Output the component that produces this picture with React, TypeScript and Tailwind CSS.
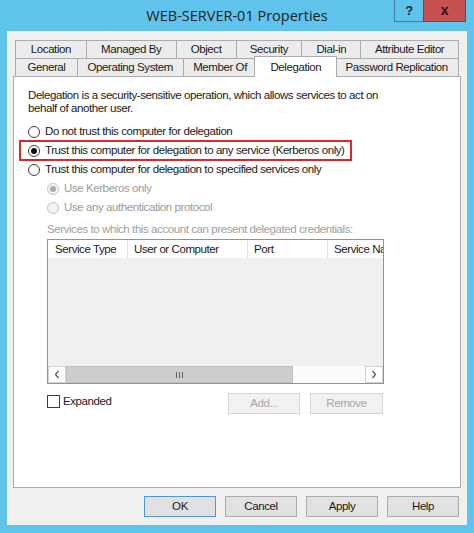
import React from 'react';

interface Tab {
  label: string;
  w: string;
}

const topTabs: Tab[] = [
  { label: 'Location', w: 'w-[72px]' },
  { label: 'Managed By', w: 'w-[91px]' },
  { label: 'Object', w: 'w-[61px]' },
  { label: 'Security', w: 'w-[67px]' },
  { label: 'Dial-in', w: 'w-[60px]' },
  { label: 'Attribute Editor', w: 'w-[99px]' },
];

const bottomTabs: Tab[] = [
  { label: 'General', w: 'w-[63px]' },
  { label: 'Operating System', w: 'w-[107px]' },
  { label: 'Member Of', w: 'w-[75px]' },
  { label: 'Delegation', w: 'w-[79px]' },
  { label: 'Password Replication', w: 'w-[125px]' },
];

const Radio: React.FC<{ checked?: boolean; disabled?: boolean }> = ({ checked = false, disabled = false }) => (
  <span
    className={`w-[12px] h-[12px] rounded-full border flex items-center justify-center shrink-0 ${
      disabled ? 'border-[#c4c4c4] bg-[#f4f4f4]' : 'border-[#3c3c3c] bg-white'
    }`}
  >
    {checked && <span className={`w-[6px] h-[6px] rounded-full ${disabled ? 'bg-[#a9a9a9]' : 'bg-[#111]'}`} />}
  </span>
);

const WinButton: React.FC<{ label: string; primary?: boolean; disabled?: boolean; w?: string }> = ({
  label,
  primary = false,
  disabled = false,
  w = 'w-[72px]',
}) => (
  <div
    className={`${w} h-[21px] flex items-center justify-center border ${
      disabled
        ? 'border-[#d5d5d5] bg-[#f2f2f2] text-[#a6a6a6]'
        : primary
        ? 'border-[#4f95d8] bg-[#e1e1e1] text-[#1a1a1a]'
        : 'border-[#adadad] bg-[#e1e1e1] text-[#1a1a1a]'
    }`}
  >
    {label}
  </div>
);

const Chevron: React.FC<{ dir: 'left' | 'right' }> = ({ dir }) => (
  <svg width="6" height="9" viewBox="0 0 6 9">
    <path
      d={dir === 'left' ? 'M4.5 1 L1.5 4.5 L4.5 8' : 'M1.5 1 L4.5 4.5 L1.5 8'}
      fill="none"
      stroke="#555"
      strokeWidth="1.2"
    />
  </svg>
);

export default function App() {
  return (
    <div className="w-[474px] h-[533px] bg-[#5fc3ec] flex flex-col px-[7px] pb-[8px] font-['Liberation_Sans',Arial,sans-serif] text-[11.5px] tracking-[-0.42px] text-[#1a1a1a]">
      {/* title bar */}
      <div className="relative -mx-[7px] h-[31px] flex items-center justify-center">
        <span className="font-['Open_Sans',sans-serif] text-[14.5px] tracking-normal text-[#1d1d1d]">
          WEB-SERVER-01 Properties
        </span>
        <div className="absolute top-0 right-[8px] flex">
          <div className="w-[30px] h-[22px] border border-t-0 border-[#3e7ea3] flex items-center justify-center font-bold text-[13px] text-[#1a2a35]">
            ?
          </div>
          <div className="w-[43px] h-[22px] -ml-px bg-[#c75050] border border-t-0 border-[#8c3a3a] flex items-center justify-center font-bold text-[14px] text-[#2a1515]">
            x
          </div>
        </div>
      </div>

      {/* dialog body */}
      <div className="flex-1 bg-[#f0f0f0] flex flex-col px-[6px] pt-[9px] pb-[8px]">
        <div className="px-[2px] flex flex-col">
          <div className="flex h-[18px]">
            {topTabs.map((t, i) => (
              <div
                key={t.label}
                className={`${t.w} ${i > 0 ? '-ml-px' : ''} h-[18px] border border-b-0 border-[#acacac] bg-[#ececec] flex items-center justify-center whitespace-nowrap`}
              >
                {t.label}
              </div>
            ))}
          </div>
          <div className="flex h-[18px]">
            {bottomTabs.map((t, i) =>
              t.label === 'Delegation' ? (
                <div
                  key={t.label}
                  className="relative z-10 w-[83px] -ml-[3px] -mr-[2px] -mt-[2px] h-[21px] border border-b-0 border-[#acacac] bg-white flex items-start pt-[2px] justify-center whitespace-nowrap"
                >
                  {t.label}
                </div>
              ) : (
                <div
                  key={t.label}
                  className={`${t.w} ${i > 0 ? '-ml-px' : ''} h-[18px] border border-b-0 border-[#acacac] bg-[#ececec] flex items-center justify-center whitespace-nowrap`}
                >
                  {t.label}
                </div>
              )
            )}
          </div>
        </div>

        {/* tab page */}
        <div className="h-[412px] border border-[#acacac] bg-white flex flex-col pt-[12px] pl-[14px] leading-[13px]">
          <p>
            Delegation is a security-sensitive operation, which allows services to act on
            <br />
            behalf of another user.
          </p>

          <div className="mt-[7px] flex flex-col">
            <div className="h-[19px] flex items-center gap-[5px]">
              <Radio />
              <span>Do not trust this computer for delegation</span>
            </div>
            <div className="-ml-[9px] pl-[7px] w-[333px] h-[21px] -my-[1px] border-2 border-[#e0242c] flex items-center gap-[5px]">
              <Radio checked />
              <span>Trust this computer for delegation to any service (Kerberos only)</span>
            </div>
            <div className="h-[19px] flex items-center gap-[5px]">
              <Radio />
              <span>Trust this computer for delegation to specified services only</span>
            </div>
            <div className="h-[19px] pl-[19px] flex items-center gap-[5px] text-[#9c9c9c]">
              <Radio checked disabled />
              <span>Use Kerberos only</span>
            </div>
            <div className="h-[19px] pl-[19px] flex items-center gap-[5px] text-[#9c9c9c]">
              <Radio disabled />
              <span>Use any authentication protocol</span>
            </div>
          </div>

          <div className="ml-[19px] mt-[6px] text-[#a0a0a0]">
            Services to which this account can present delegated credentials:
          </div>

          {/* list view */}
          <div className="ml-[19px] mt-[3px] w-[337px] h-[145px] border border-[#8f939a] bg-[#f0f0f0] flex flex-col">
            <div className="h-[18px] bg-white flex shrink-0">
              <div className="w-[80px] border-r border-[#e3e3e3] pl-[7px] flex items-center whitespace-nowrap">Service Type</div>
              <div className="w-[120px] border-r border-[#e3e3e3] pl-[6px] flex items-center whitespace-nowrap">User or Computer</div>
              <div className="w-[80px] border-r border-[#e3e3e3] pl-[6px] flex items-center whitespace-nowrap">Port</div>
              <div className="flex-1 pl-[6px] flex items-center whitespace-nowrap overflow-hidden">Service Na</div>
            </div>
            <div className="flex-1" />
            <div className="h-[17px] flex bg-[#fbfbfb] shrink-0">
              <div className="w-[18px] border border-[#d2d2d2] bg-white flex items-center justify-center">
                <Chevron dir="left" />
              </div>
              <div className="w-[227px] bg-[#cdcdcd] border border-[#c0c0c0] flex items-center justify-center gap-[2px]">
                <span className="w-px h-[6px] bg-[#606060]" />
                <span className="w-px h-[6px] bg-[#606060]" />
                <span className="w-px h-[6px] bg-[#606060]" />
              </div>
              <div className="flex-1" />
              <div className="w-[18px] border border-[#d2d2d2] bg-white flex items-center justify-center">
                <Chevron dir="right" />
              </div>
            </div>
          </div>

          <div className="ml-[19px] mt-[9px] flex h-[21px]">
            <div className="w-[181px] flex items-start gap-[3px] pt-[2px]">
              <span className="w-[13px] h-[13px] border border-[#3c3c3c] bg-white shrink-0" />
              <span className="leading-[13px]">Expanded</span>
            </div>
            <WinButton label="Add..." disabled />
            <div className="w-[10px]" />
            <WinButton label="Remove" disabled w="w-[73px]" />
          </div>
        </div>

        {/* dialog buttons */}
        <div className="mt-[8px] pr-[2px] flex justify-end gap-[9px]">
          <WinButton label="OK" primary />
          <WinButton label="Cancel" />
          <WinButton label="Apply" />
          <WinButton label="Help" />
        </div>
      </div>
    </div>
  );
}
